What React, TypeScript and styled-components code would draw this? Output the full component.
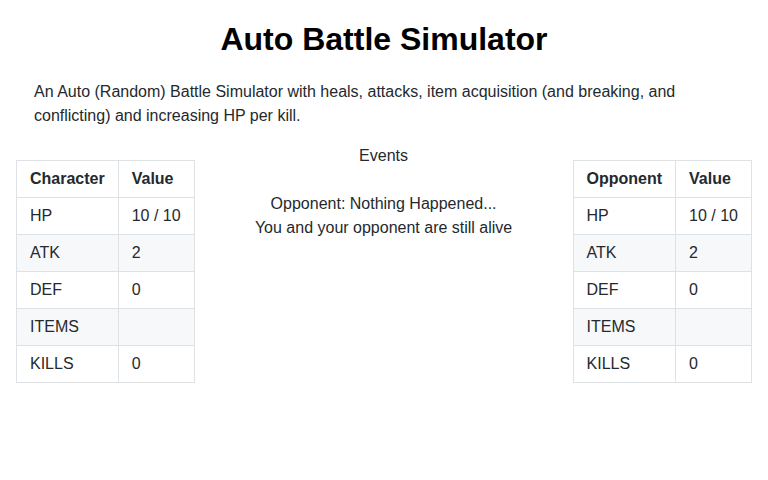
import React from 'react'
import styled, { createGlobalStyle } from 'styled-components'

type Stat = { label: string; value: string }

const playerStats: Stat[] = [
    { label: 'HP', value: '10 / 10' },
    { label: 'ATK', value: '2' },
    { label: 'DEF', value: '0' },
    { label: 'ITEMS', value: '' },
    { label: 'KILLS', value: '0' },
]

const opponentStats: Stat[] = [
    { label: 'HP', value: '10 / 10' },
    { label: 'ATK', value: '2' },
    { label: 'DEF', value: '0' },
    { label: 'ITEMS', value: '' },
    { label: 'KILLS', value: '0' },
]

const events: string[] = [
    'Opponent: Nothing Happened...',
    'You and your opponent are still alive',
]

const StatTable: React.FC<{ title: string; stats: Stat[] }> = ({ title, stats }) => (
    <Table>
        <thead>
            <tr>
                <HeadCell>{title}</HeadCell>
                <HeadCell>Value</HeadCell>
            </tr>
        </thead>
        <tbody>
            {stats.map((s, i) => (
                <Row key={s.label} $striped={i % 2 === 1}>
                    <Cell>{s.label}</Cell>
                    <Cell>{s.value}</Cell>
                </Row>
            ))}
        </tbody>
    </Table>
)

const App: React.FC = () => {
    return (
        <Page>
            <GlobalStyle />
            <Title>Auto Battle Simulator</Title>
            <Intro>
                An Auto (Random) Battle Simulator with heals, attacks, item acquisition (and breaking, and
                conflicting) and increasing HP per kill.
            </Intro>
            <Board>
                <StatTable title="Character" stats={playerStats} />
                <EventLog>
                    <EventTitle>Events</EventTitle>
                    {events.map(e => (
                        <EventLine key={e}>{e}</EventLine>
                    ))}
                </EventLog>
                <StatTable title="Opponent" stats={opponentStats} />
            </Board>
        </Page>
    )
}

const GlobalStyle = createGlobalStyle`
    * { box-sizing: border-box; }
    body {
        margin: 0;
        background: #ffffff;
        color: #24292e;
        font-family: "Liberation Sans", Arial, sans-serif;
        font-size: 16px;
        line-height: 24px;
    }
`

const Page = styled.main`
    padding: 0 16px;
`

const Title = styled.h1`
    margin: 0;
    padding-top: 19px;
    font-size: 32px;
    line-height: 40px;
    font-weight: 700;
    color: #000000;
    text-align: center;
`

const Intro = styled.p`
    margin: 21px 0 16px;
    padding: 0 18px;
`

const Board = styled.section`
    display: flex;
    justify-content: space-between;
    align-items: flex-start;
`

const Table = styled.table`
    margin-top: 16px;
    border-collapse: collapse;
    border-spacing: 0;
`

const HeadCell = styled.th`
    padding: 6px 13px;
    border: 1px solid #dfe2e5;
    font-weight: 700;
    text-align: left;
`

const Row = styled.tr<{ $striped: boolean }>`
    background: ${p => (p.$striped ? '#f6f8fa' : '#ffffff')};
`

const Cell = styled.td`
    padding: 6px 13px;
    border: 1px solid #dfe2e5;
    height: 37px;
`

const EventLog = styled.div`
    flex: 1;
    text-align: center;
`

const EventTitle = styled.div`
    margin-bottom: 24px;
`

const EventLine = styled.div``

export default App
